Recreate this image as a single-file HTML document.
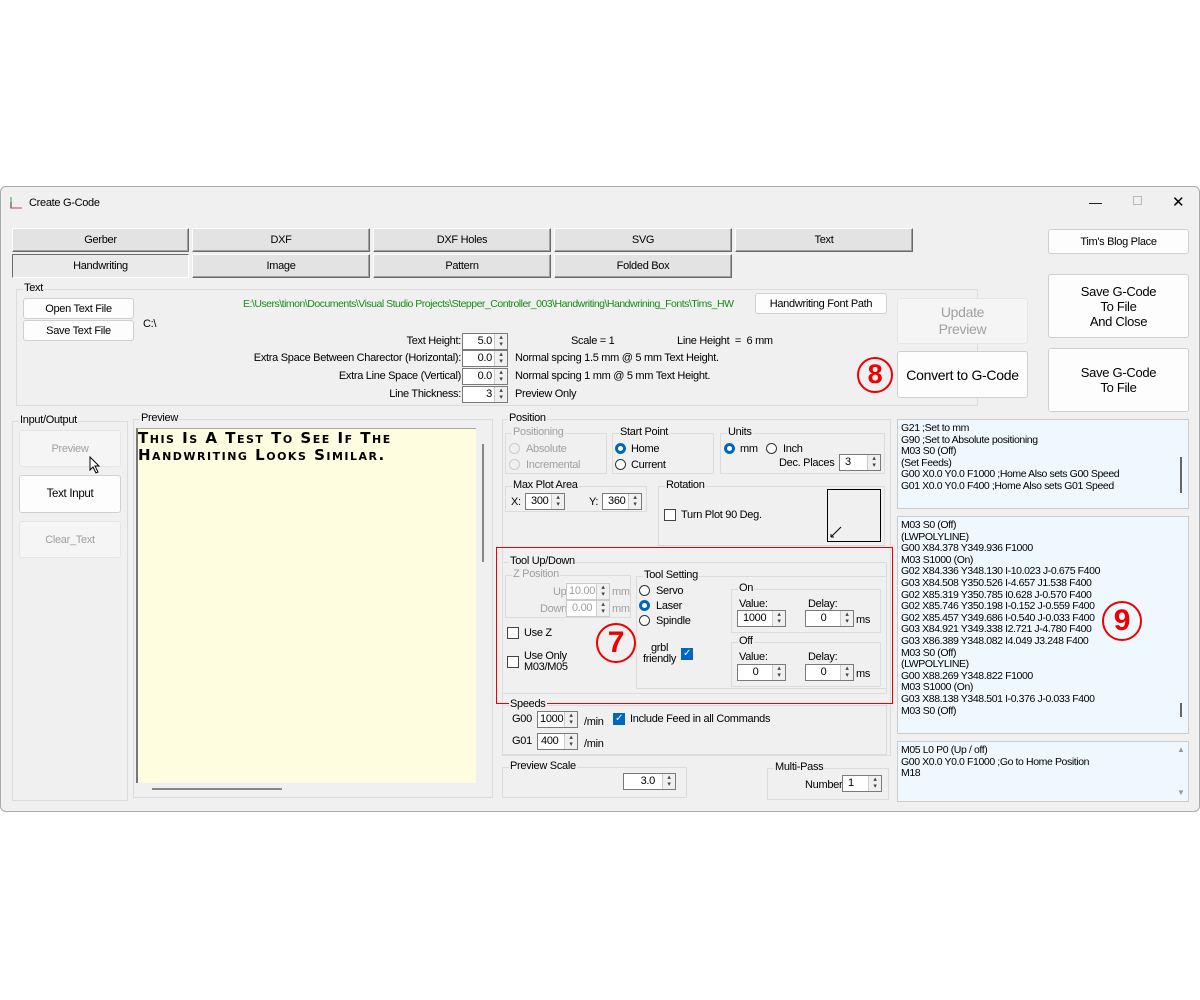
<!DOCTYPE html>
<html><head><meta charset="utf-8"><style>
*{box-sizing:border-box;margin:0;padding:0}
body{width:1200px;height:1000px;background:#fff;font-family:"Liberation Sans",sans-serif;font-size:11px;color:#000;position:relative;overflow:hidden;letter-spacing:-0.3px}
.a{position:absolute;white-space:nowrap}
.win{position:absolute;left:0;top:186px;width:1200px;height:626px;background:#f0f0f0;border:1px solid #aaa;border-radius:6px}
.tab{position:absolute;height:24px;background:#e3e3e3;border:1px solid;border-color:#fff #6a6a6a #6a6a6a #fff;box-shadow:inset -1px -1px 0 #a0a0a0;text-align:center;line-height:22px}
.btn{position:absolute;background:#fdfdfd;border:1px solid #d0d0d0;border-radius:3px;text-align:center;display:flex;align-items:center;justify-content:center}
.dis{background:#f5f5f5;color:#a0a0a0;border-color:#e5e5e5}
.g{position:absolute;border:1px solid #dcdcdc}
.gl{position:absolute;top:-8px;left:6px;background:#f0f0f0;padding:0 1px;white-space:nowrap}
.sp{position:absolute;height:17px;background:#fff;border:1px solid #7a7a7a;text-align:right;padding-right:15px;line-height:15px}
.sp::after{content:"▴\A▾";white-space:pre;position:absolute;right:0;top:0;width:12px;height:15px;border-left:1px solid #ccc;background:#f0f0f0;font-size:7px;line-height:7px;text-align:center;color:#444}
.spl{text-align:left;padding-left:5px}
.r{position:absolute;width:11px;height:11px;border:1px solid #333;border-radius:50%;background:#fff}
.r.on{border:3px solid #0067c0}
.r.d{border-color:#ccc;background:#f0f0f0}
.cb{position:absolute;width:12px;height:12px;border:1px solid #444;background:#fff}
.cb.on{background:#0067c0;border-color:#0067c0;color:#fff;font-size:10px;line-height:10px;text-align:center}
.gc{position:absolute;background:#f0f8ff;border:1px solid #ccc;padding:3px 3px;line-height:11.6px;font-size:10.5px;letter-spacing:-0.4px;white-space:pre}
.circ{position:absolute;border:2px solid #e00;border-radius:50%;color:#e00;font-size:27px;text-align:center;font-weight:bold}
</style></head><body>
<div class="win"></div>
<svg class="a" style="left:9px;top:196px" width="14" height="14"><path d="M2 1V12H13" stroke="#333" fill="none"/><path d="M2 12H13" stroke="#d33"/><path d="M2 1V6" stroke="#3a3"/></svg>
<div class="a" style="left:29px;top:197px">Create G-Code</div>
<div class="a" style="left:1089px;top:195px;font-size:13px">—</div>
<div class="a" style="left:1133px;top:196px;width:9px;height:9px;border:1px solid #bbb"></div>
<div class="a" style="left:1172px;top:193px;font-size:15px">✕</div>

<div class="tab" style="left:12px;top:228px;width:177px">Gerber</div>
<div class="tab" style="left:192px;top:228px;width:178px">DXF</div>
<div class="tab" style="left:373px;top:228px;width:178px">DXF Holes</div>
<div class="tab" style="left:554px;top:228px;width:178px">SVG</div>
<div class="tab" style="left:735px;top:228px;width:178px">Text</div>
<div class="tab" style="left:12px;top:254px;width:177px;border-color:#6a6a6a #fff #fff #6a6a6a;background:#eaeaea;box-shadow:none">Handwriting</div>
<div class="tab" style="left:192px;top:254px;width:178px">Image</div>
<div class="tab" style="left:373px;top:254px;width:178px">Pattern</div>
<div class="tab" style="left:554px;top:254px;width:178px">Folded Box</div>

<div class="btn" style="left:1048px;top:229px;width:141px;height:25px">Tim's Blog Place</div>
<div class="btn" style="left:1048px;top:274px;width:141px;height:64px;font-size:13px;line-height:15px">Save G-Code<br>To File<br>And Close</div>
<div class="btn" style="left:1048px;top:348px;width:141px;height:64px;font-size:13px;line-height:15px">Save G-Code<br>To File</div>

<div class="g" style="left:16px;top:289px;width:962px;height:117px"><span class="gl">Text</span></div>
<div class="btn" style="left:23px;top:298px;width:111px;height:21px">Open Text File</div>
<div class="btn" style="left:23px;top:320px;width:111px;height:21px">Save Text File</div>
<div class="a" style="left:143px;top:318px">C:\</div>
<div class="a" style="left:243px;top:298px;color:#1a8a1a;font-size:10.5px;letter-spacing:-0.5px">E:\Users\timon\Documents\Visual Studio Projects\Stepper_Controller_003\Handwriting\Handwrining_Fonts\Tims_HW</div>
<div class="btn" style="left:755px;top:293px;width:132px;height:21px">Handwriting Font Path</div>
<div class="btn dis" style="left:897px;top:298px;width:131px;height:46px;font-size:14px;line-height:17px">Update<br>Preview</div>
<div class="btn" style="left:897px;top:351px;width:131px;height:47px;font-size:14px">Convert to G-Code</div>
<div class="circ" style="left:857px;top:357px;width:36px;height:36px;line-height:31px">8</div>

<div class="a" style="right:739px;top:335px">Text Height:</div>
<div class="a" style="right:739px;top:352px">Extra Space Between Charector (Horizontal):</div>
<div class="a" style="right:739px;top:370px">Extra Line Space (Vertical)</div>
<div class="a" style="right:739px;top:388px">Line Thickness:</div>
<div class="sp" style="left:462px;top:333px;width:46px">5.0</div>
<div class="sp" style="left:462px;top:350px;width:46px">0.0</div>
<div class="sp" style="left:462px;top:368px;width:46px">0.0</div>
<div class="sp" style="left:462px;top:386px;width:46px">3</div>
<div class="a" style="left:571px;top:335px">Scale = 1</div>
<div class="a" style="left:677px;top:335px">Line Height &nbsp;= &nbsp;6 mm</div>
<div class="a" style="left:515px;top:352px">Normal spcing 1.5 mm @ 5 mm Text Height.</div>
<div class="a" style="left:515px;top:370px">Normal spcing 1 mm @ 5 mm Text Height.</div>
<div class="a" style="left:515px;top:388px">Preview Only</div>

<div class="g" style="left:12px;top:421px;width:116px;height:380px"><span class="gl">Input/Output</span></div>
<div class="btn dis" style="left:19px;top:430px;width:102px;height:37px">Preview</div>
<svg class="a" style="left:89px;top:456px" width="12" height="18"><path d="M1 1V14L4 11L7 17L9 16L6 10H10Z" fill="#fff" stroke="#000"/></svg>
<div class="btn" style="left:19px;top:475px;width:102px;height:38px;font-size:11.5px">Text Input</div>
<div class="btn dis" style="left:19px;top:521px;width:102px;height:37px">Clear_Text</div>

<div class="g" style="left:133px;top:419px;width:360px;height:379px"><span class="gl">Preview</span></div>
<div class="a" style="left:136px;top:428px;width:340px;height:355px;background:#fefde0;border-left:2px solid #777;border-top:1px solid #aaa"></div>
<div class="a" style="left:476px;top:428px;width:14px;height:355px;background:#f0f0f0"></div>
<div class="a" style="left:482px;top:444px;width:2px;height:118px;background:#888"></div>
<div class="a" style="left:152px;top:788px;width:130px;height:2px;background:#888"></div>
<div class="a" style="left:138px;top:430px;font-family:'DejaVu Sans',sans-serif;font-weight:900;font-size:15px;font-variant:small-caps;line-height:17px;letter-spacing:1.5px">This Is A Test To See If The<br>Handwriting Looks Similar.</div>

<div class="g" style="left:502px;top:419px;width:389px;height:337px"><span class="gl" style="left:5px">Position</span></div>
<div class="g" style="left:505px;top:433px;width:102px;height:41px"><span class="gl" style="color:#a0a0a0">Positioning</span></div>
<div class="r d" style="left:509px;top:443px"></div><div class="a" style="left:526px;top:443px;color:#a0a0a0">Absolute</div>
<div class="r d" style="left:509px;top:459px"></div><div class="a" style="left:526px;top:459px;color:#a0a0a0">Incremental</div>
<div class="g" style="left:612px;top:433px;width:102px;height:41px"><span class="gl">Start Point</span></div>
<div class="r on" style="left:615px;top:443px"></div><div class="a" style="left:631px;top:443px">Home</div>
<div class="r" style="left:615px;top:459px"></div><div class="a" style="left:631px;top:459px">Current</div>
<div class="g" style="left:720px;top:433px;width:165px;height:41px"><span class="gl">Units</span></div>
<div class="r on" style="left:724px;top:443px"></div><div class="a" style="left:740px;top:443px">mm</div>
<div class="r" style="left:766px;top:443px"></div><div class="a" style="left:783px;top:443px">Inch</div>
<div class="a" style="left:779px;top:457px">Dec. Places</div>
<div class="sp spl" style="left:839px;top:454px;width:42px">3</div>
<div class="g" style="left:505px;top:486px;width:142px;height:26px"><span class="gl">Max Plot Area</span></div>
<div class="a" style="left:511px;top:496px">X:</div><div class="sp spl" style="left:525px;top:493px;width:40px">300</div>
<div class="a" style="left:589px;top:496px">Y:</div><div class="sp spl" style="left:602px;top:493px;width:40px">360</div>
<div class="g" style="left:658px;top:486px;width:227px;height:60px"><span class="gl">Rotation</span></div>
<div class="cb" style="left:664px;top:509px"></div><div class="a" style="left:681px;top:509px">Turn Plot 90 Deg.</div>
<div class="a" style="left:827px;top:489px;width:54px;height:53px;border:1px solid #000;background:#f0f0f0"></div>
<svg class="a" style="left:829px;top:526px" width="14" height="14"><path d="M12 1L2 11M2 11V8M2 11H5" stroke="#000" fill="none"/></svg>

<div class="a" style="left:496px;top:547px;width:397px;height:157px;border:1px solid #e00"></div>
<div class="g" style="left:502px;top:562px;width:385px;height:132px"><span class="gl" style="left:6px">Tool Up/Down</span></div>
<div class="g" style="left:505px;top:575px;width:126px;height:43px"><span class="gl" style="color:#a0a0a0">Z Position</span></div>
<div class="a" style="left:553px;top:586px;color:#a0a0a0">Up</div>
<div class="sp spl" style="left:566px;top:583px;width:44px;color:#a0a0a0;border-color:#ccc;padding-left:2px">10.00</div><div class="a" style="left:612px;top:586px;color:#a0a0a0">mm</div>
<div class="a" style="left:540px;top:603px;color:#a0a0a0">Down</div>
<div class="sp spl" style="left:566px;top:600px;width:44px;color:#a0a0a0;border-color:#ccc">0.00</div><div class="a" style="left:612px;top:603px;color:#a0a0a0">mm</div>
<div class="cb" style="left:507px;top:627px"></div><div class="a" style="left:524px;top:627px">Use Z</div>
<div class="cb" style="left:507px;top:656px"></div><div class="a" style="left:524px;top:651px;line-height:11px">Use Only<br>M03/M05</div>
<div class="circ" style="left:596px;top:623px;width:40px;height:40px;line-height:36px;font-size:30px">7</div>
<div class="g" style="left:636px;top:576px;width:251px;height:113px"><span class="gl">Tool Setting</span></div>
<div class="r" style="left:639px;top:585px"></div><div class="a" style="left:656px;top:585px">Servo</div>
<div class="r on" style="left:639px;top:600px"></div><div class="a" style="left:656px;top:600px">Laser</div>
<div class="r" style="left:639px;top:615px"></div><div class="a" style="left:656px;top:615px">Spindle</div>
<div class="a" style="left:643px;top:643px;line-height:11px;text-align:center">grbl<br>friendly</div>
<div class="cb on" style="left:681px;top:648px">✓</div>
<div class="g" style="left:731px;top:589px;width:150px;height:44px"><span class="gl">On</span></div>
<div class="a" style="left:739px;top:598px">Value:</div><div class="a" style="left:808px;top:598px">Delay:</div>
<div class="sp spl" style="left:737px;top:610px;width:49px">1000</div>
<div class="sp" style="left:805px;top:610px;width:49px;text-align:center;padding:0 12px 0 0">0</div><div class="a" style="left:856px;top:614px">ms</div>
<div class="g" style="left:731px;top:642px;width:150px;height:45px"><span class="gl">Off</span></div>
<div class="a" style="left:739px;top:651px">Value:</div><div class="a" style="left:808px;top:651px">Delay:</div>
<div class="sp" style="left:737px;top:664px;width:49px;text-align:center;padding:0 12px 0 0">0</div>
<div class="sp" style="left:805px;top:664px;width:49px;text-align:center;padding:0 12px 0 0">0</div><div class="a" style="left:856px;top:668px">ms</div>

<div class="g" style="left:502px;top:705px;width:385px;height:50px"><span class="gl" style="left:6px">Speeds</span></div>
<div class="a" style="left:512px;top:713px">G00</div><div class="sp spl" style="left:537px;top:711px;width:41px;padding-left:2px">1000</div><div class="a" style="left:584px;top:716px">/min</div>
<div class="cb on" style="left:613px;top:713px">✓</div><div class="a" style="left:630px;top:713px">Include Feed in all Commands</div>
<div class="a" style="left:512px;top:735px">G01</div><div class="sp spl" style="left:537px;top:733px;width:41px;padding-left:3px">400</div><div class="a" style="left:584px;top:738px">/min</div>
<div class="g" style="left:502px;top:767px;width:185px;height:31px"><span class="gl">Preview Scale</span></div>
<div class="sp" style="left:623px;top:773px;width:53px;padding-right:20px">3.0</div>
<div class="g" style="left:767px;top:768px;width:122px;height:32px"><span class="gl">Multi-Pass</span></div>
<div class="a" style="left:805px;top:779px">Number:</div><div class="sp spl" style="left:842px;top:775px;width:40px">1</div>

<div class="gc" style="left:897px;top:419px;width:292px;height:90px">G21 ;Set to mm
G90 ;Set to Absolute positioning
M03 S0 (Off)
(Set Feeds)
G00 X0.0 Y0.0 F1000 ;Home Also sets G00 Speed
G01 X0.0 Y0.0 F400 ;Home Also sets G01 Speed</div>
<div class="a" style="left:1180px;top:457px;width:2px;height:36px;background:#666"></div>
<div class="gc" style="left:897px;top:516px;width:292px;height:218px">M03 S0 (Off)
(LWPOLYLINE)
G00 X84.378 Y349.936 F1000
M03 S1000 (On)
G02 X84.336 Y348.130 I-10.023 J-0.675 F400
G03 X84.508 Y350.526 I-4.657 J1.538 F400
G02 X85.319 Y350.785 I0.628 J-0.570 F400
G02 X85.746 Y350.198 I-0.152 J-0.559 F400
G02 X85.457 Y349.686 I-0.540 J-0.033 F400
G03 X84.921 Y349.338 I2.721 J-4.780 F400
G03 X86.389 Y348.082 I4.049 J3.248 F400
M03 S0 (Off)
(LWPOLYLINE)
G00 X88.269 Y348.822 F1000
M03 S1000 (On)
G03 X88.138 Y348.501 I-0.376 J-0.033 F400
M03 S0 (Off)</div>
<div class="a" style="left:1180px;top:703px;width:2px;height:14px;background:#666"></div>
<div class="circ" style="left:1102px;top:601px;width:40px;height:40px;line-height:36px;font-size:30px">9</div>
<div class="gc" style="left:897px;top:741px;width:292px;height:61px">M05 L0 P0 (Up / off)
G00 X0.0 Y0.0 F1000 ;Go to Home Position
M18</div>
<div class="a" style="left:1177px;top:745px;font-size:8px;color:#999">▲</div>
<div class="a" style="left:1177px;top:788px;font-size:8px;color:#999">▼</div>
</body></html>
